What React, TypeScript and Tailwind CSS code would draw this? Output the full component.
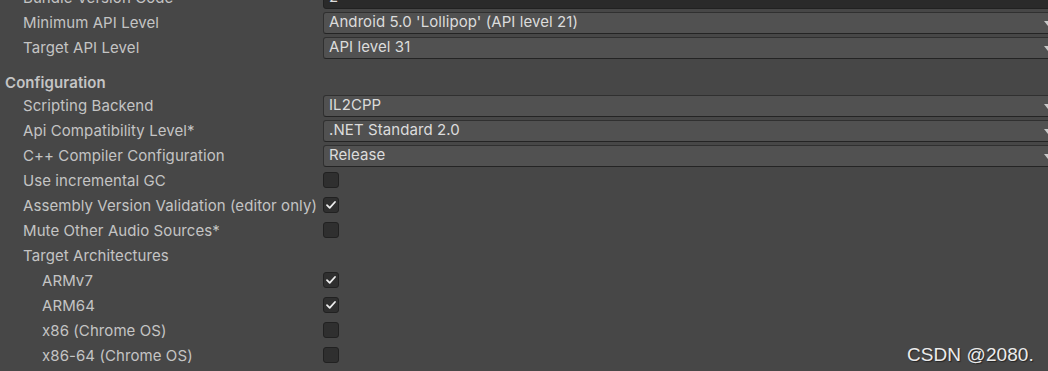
import type { ReactNode } from "react";

const Dropdown = ({ value }: { value: string }) => (
  <div className="relative mb-[2px] flex h-[22px] items-center rounded-[3px] border border-[#303030] border-b-[#242424] bg-[#515151] pl-[5px] text-[#dcdcdc]">
    <span>{value}</span>
    <svg
      className="absolute right-[4px] top-[8px]"
      width="8"
      height="5"
      viewBox="0 0 8 5"
    >
      <path d="M0 0 H8 L4 5 Z" fill="#c8c8c8" />
    </svg>
  </div>
);

const Checkbox = ({ checked }: { checked?: boolean }) => (
  <div className="mb-[3px] flex h-[16px] w-[16px] items-center justify-center rounded-[3px] border border-[#212121] bg-[#2f2f2f]">
    {checked && (
      <svg width="12" height="10" viewBox="0 0 12 10">
        <path
          d="M2 5.2 L4.7 7.8 L10 2"
          fill="none"
          stroke="#eeeeee"
          strokeWidth="1.8"
          strokeLinecap="round"
          strokeLinejoin="round"
        />
      </svg>
    )}
  </div>
);

const Row = ({
  label,
  indent,
  children,
}: {
  label: string;
  indent?: boolean;
  children?: ReactNode;
}) => (
  <div className="flex h-[25px] items-center">
    <div
      className={`w-[323px] shrink-0 whitespace-nowrap ${
        indent ? "pl-[42px]" : "pl-[23px]"
      }`}
    >
      {label}
    </div>
    <div className="flex-1">{children}</div>
  </div>
);

export default function App() {
  return (
    <div
      className="relative h-[371px] w-[1048px] overflow-hidden bg-[#474747] text-[15px] tracking-[0.08px] text-[#c4c4c4]"
      style={{ fontFamily: "Inter, 'Noto Sans', sans-serif" }}
    >
      <div className="-mt-[14px] w-[1057px]">
        <Row label="Bundle Version Code">
          <div className="mb-[2px] flex h-[22px] items-center rounded-[3px] border border-[#212121] bg-[#2a2a2a] pl-[5px] text-[#dcdcdc]">
            2
          </div>
        </Row>
        <Row label="Minimum API Level">
          <Dropdown value="Android 5.0 'Lollipop' (API level 21)" />
        </Row>
        <Row label="Target API Level">
          <Dropdown value="API level 31" />
        </Row>

        <div className="mt-[9px] flex h-[24px] items-center pl-[5px] pt-[2px] font-semibold">
          Configuration
        </div>

        <Row label="Scripting Backend">
          <Dropdown value="IL2CPP" />
        </Row>
        <Row label="Api Compatibility Level*">
          <Dropdown value=".NET Standard 2.0" />
        </Row>
        <Row label="C++ Compiler Configuration">
          <Dropdown value="Release" />
        </Row>
        <Row label="Use incremental GC">
          <Checkbox />
        </Row>
        <Row label="Assembly Version Validation (editor only)">
          <Checkbox checked />
        </Row>
        <Row label="Mute Other Audio Sources*">
          <Checkbox />
        </Row>
        <Row label="Target Architectures" />
        <Row label="ARMv7" indent>
          <Checkbox checked />
        </Row>
        <Row label="ARM64" indent>
          <Checkbox checked />
        </Row>
        <Row label="x86 (Chrome OS)" indent>
          <Checkbox />
        </Row>
        <Row label="x86-64 (Chrome OS)" indent>
          <Checkbox />
        </Row>
      </div>

      <div
        className="absolute left-[907px] top-[341px] text-[19px] text-[#ececec] [text-shadow:1px_1px_1px_rgba(0,0,0,0.5)]"
        style={{ fontFamily: "'Liberation Sans', Arial, sans-serif" }}
      >
        CSDN @2080.
      </div>
    </div>
  );
}
